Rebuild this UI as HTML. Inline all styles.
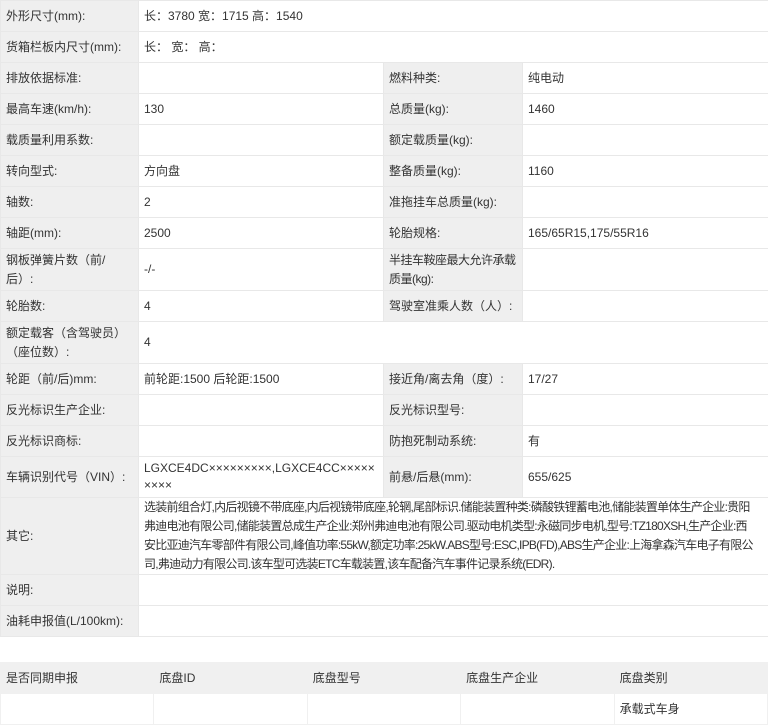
<!DOCTYPE html>
<html><head><meta charset="utf-8"><style>
*{margin:0;padding:0;box-sizing:border-box}
body{width:768px;height:723px;overflow:hidden;background:#fff;font-family:"Liberation Sans","Noto Sans CJK SC",sans-serif;font-size:12px;color:#333}
table{border-collapse:collapse;table-layout:fixed;width:768px}
td{border:1px solid #e8e8e8;padding:0 5px;vertical-align:middle;line-height:19px}
td.l{background:#efefef}
td.nw{white-space:nowrap;overflow:hidden}
#t2{position:absolute;top:662px;left:0}
#t2 td{height:31px;border-color:#f0f0f0}
#t2 tr:first-child td{background:#f0f0f0}
</style></head><body>
<table>
<colgroup><col style="width:138px"><col style="width:245px"><col style="width:139px"><col style="width:246px"></colgroup>
<tr style="height:31px"><td class="l">外形尺寸(mm):</td><td colspan="3">长：3780 宽：1715 高：1540</td></tr>
<tr style="height:31px"><td class="l">货箱栏板内尺寸(mm):</td><td colspan="3">长： 宽： 高：</td></tr>
<tr style="height:31px"><td class="l">排放依据标准:</td><td></td><td class="l">燃料种类:</td><td>纯电动</td></tr>
<tr style="height:31px"><td class="l">最高车速(km/h):</td><td>130</td><td class="l">总质量(kg):</td><td>1460</td></tr>
<tr style="height:31px"><td class="l">载质量利用系数:</td><td></td><td class="l">额定载质量(kg):</td><td></td></tr>
<tr style="height:31px"><td class="l">转向型式:</td><td>方向盘</td><td class="l">整备质量(kg):</td><td>1160</td></tr>
<tr style="height:31px"><td class="l">轴数:</td><td>2</td><td class="l">准拖挂车总质量(kg):</td><td></td></tr>
<tr style="height:31px"><td class="l">轴距(mm):</td><td>2500</td><td class="l">轮胎规格:</td><td>165/65R15,175/55R16</td></tr>
<tr style="height:42px"><td class="l nw">钢板弹簧片数（前/<br>后）:</td><td>-/-</td><td class="l nw" style="letter-spacing:-0.5px;padding-right:0">半挂车鞍座最大允许承载<br>质量(kg):</td><td></td></tr>
<tr style="height:31px"><td class="l">轮胎数:</td><td>4</td><td class="l">驾驶室准乘人数（人）:</td><td></td></tr>
<tr style="height:42px"><td class="l nw">额定载客（含驾驶员）<br>（座位数）:</td><td colspan="3">4</td></tr>
<tr style="height:31px"><td class="l">轮距（前/后)mm:</td><td>前轮距:1500 后轮距:1500</td><td class="l">接近角/离去角（度）:</td><td>17/27</td></tr>
<tr style="height:31px"><td class="l">反光标识生产企业:</td><td></td><td class="l">反光标识型号:</td><td></td></tr>
<tr style="height:31px"><td class="l">反光标识商标:</td><td></td><td class="l">防抱死制动系统:</td><td>有</td></tr>
<tr style="height:41px"><td class="l">车辆识别代号（VIN）:</td><td style="line-height:17px;word-break:break-all">LGXCE4DC×××××××××,LGXCE4CC×××××××××</td><td class="l">前悬/后悬(mm):</td><td>655/625</td></tr>
<tr style="height:77px"><td class="l">其它:</td><td colspan="3" class="nw" style="letter-spacing:-0.75px">选装前组合灯,内后视镜不带底座,内后视镜带底座,轮辋,尾部标识.储能装置种类:磷酸铁锂蓄电池,储能装置单体生产企业:贵阳<br>弗迪电池有限公司,储能装置总成生产企业:郑州弗迪电池有限公司.驱动电机类型:永磁同步电机,型号:TZ180XSH,生产企业:西<br>安比亚迪汽车零部件有限公司,峰值功率:55kW,额定功率:25kW.ABS型号:ESC,IPB(FD),ABS生产企业:上海拿森汽车电子有限公<br>司,弗迪动力有限公司.该车型可选装ETC车载装置,该车配备汽车事件记录系统(EDR).</td></tr>
<tr style="height:31px"><td class="l">说明:</td><td colspan="3"></td></tr>
<tr style="height:31px"><td class="l">油耗申报值(L/100km):</td><td colspan="3"></td></tr>
</table>
<table id="t2">
<tr><td>是否同期申报</td><td>底盘ID</td><td>底盘型号</td><td>底盘生产企业</td><td>底盘类别</td></tr>
<tr><td></td><td></td><td></td><td></td><td>承载式车身</td></tr>
</table>
</body></html>
